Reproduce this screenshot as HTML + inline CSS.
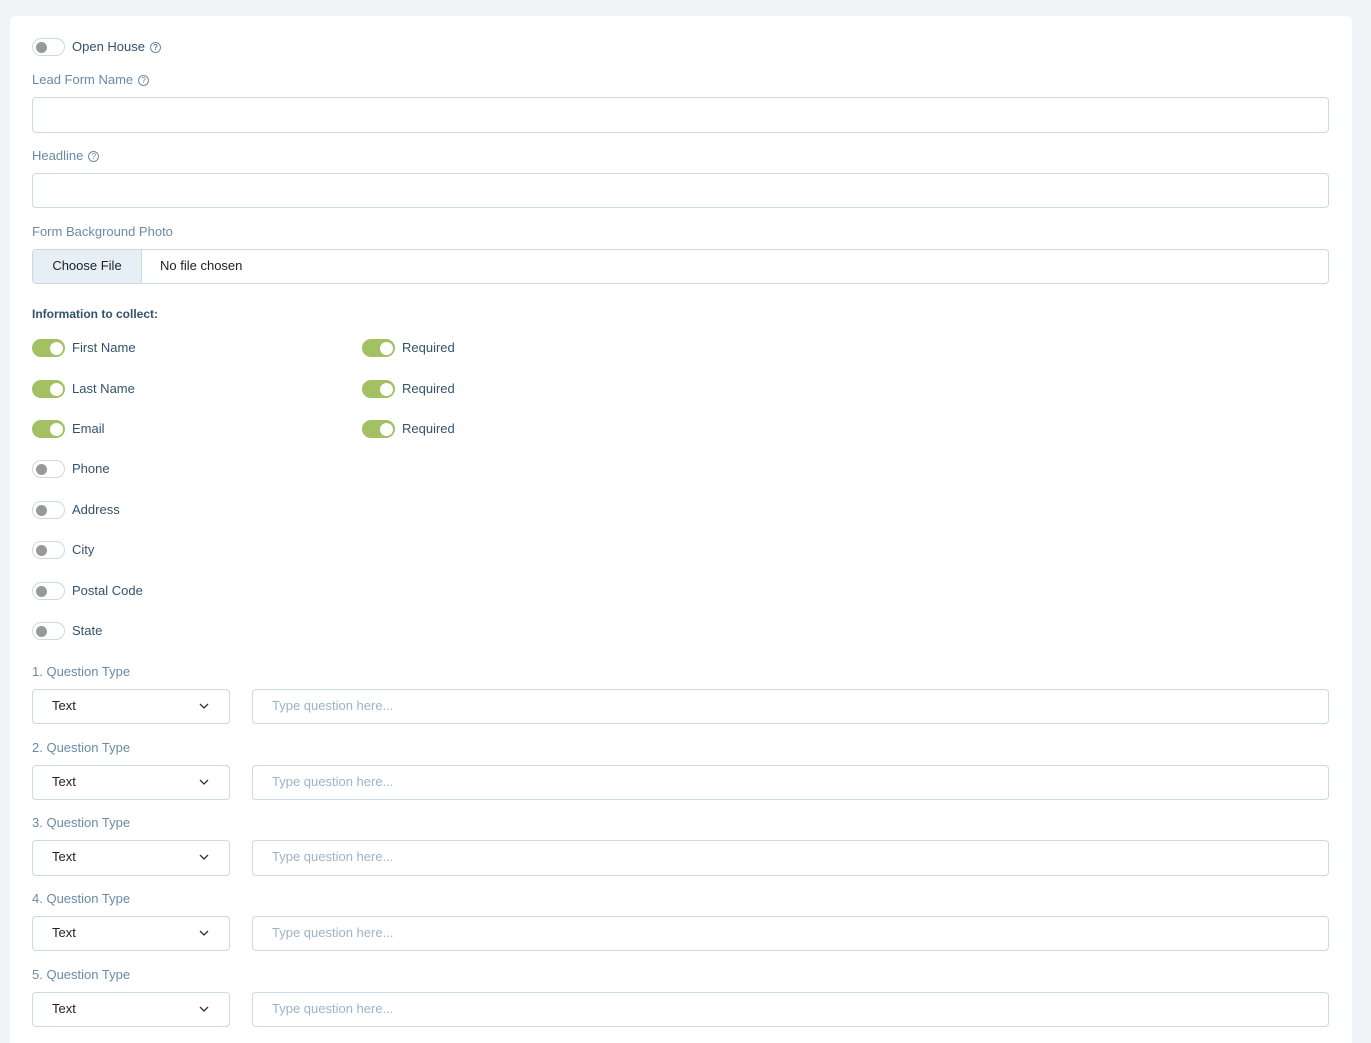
<!DOCTYPE html><html style="height:1043px;overflow:hidden"><head><style>
*{box-sizing:border-box;margin:0;padding:0}
body{width:1371px;height:1043px;background:#f0f4f7;font-family:"Liberation Sans",sans-serif;position:relative;overflow:hidden}
.card{position:absolute;left:10px;top:16px;width:1342px;height:1040px;background:#fff;border-radius:6px}
.a{position:absolute}
.lbl{position:absolute;left:32px;font-size:13px;color:#6b8aa5}
.txt{font-size:13px;color:#34526c}
.inp{position:absolute;border:1px solid #c8dae7;border-radius:4px;background:#fff}
.tg{position:absolute;width:33px;height:18px;border-radius:9px;border:1px solid #c8dae7;background:#fff}
.tg::after{content:"";position:absolute;left:3px;top:3px;width:11px;height:11px;border-radius:50%;background:#999}
.tg.on{background:#a3c063;border-color:#a3c063}
.tg.on::after{left:17px;top:2px;width:13px;height:13px;background:#fff}
.q{display:inline-block;width:11px;height:11px;border:1px solid #6b8aa5;border-radius:50%;font-size:8px;text-align:center;line-height:9px;vertical-align:1px;margin-left:5px}
.sel{font-size:13px;color:#222;padding:0 0 0 19px;line-height:32px}
.ph{font-size:13px;color:#9fb3c4;padding-left:19px;line-height:32px}
</style></head><body>
<div class="card"></div>
<div class="tg" style="left:32px;top:38px"></div><div class="a txt" style="left:72px;top:39px">Open House<span class="q">?</span></div>
<div class="lbl" style="top:72px">Lead Form Name<span class="q">?</span></div>
<div class="inp" style="left:32px;top:97px;width:1297px;height:36px"></div>
<div class="lbl" style="top:148px">Headline<span class="q">?</span></div>
<div class="inp" style="left:32px;top:173px;width:1297px;height:35px"></div>
<div class="lbl" style="top:224px">Form Background Photo</div>
<div class="inp" style="left:32px;top:249px;width:1297px;height:35px;overflow:hidden"><div class="a" style="left:0;top:0;width:109px;height:33px;background:#e6eff6;border-right:1px solid #c8dae7;font-size:13px;color:#222;line-height:32px;text-align:center">Choose File</div><div class="a" style="left:127px;top:0;line-height:32px;font-size:13px;color:#222">No file chosen</div></div>
<div class="a" style="left:32px;top:307px;font-size:12px;font-weight:bold;color:#34526c">Information to collect:</div>
<div class="tg on" style="left:32px;top:339px"></div><div class="a txt" style="left:72px;top:340px">First Name</div>
<div class="tg on" style="left:362px;top:339px"></div><div class="a txt" style="left:402px;top:340px">Required</div>
<div class="tg on" style="left:32px;top:380px"></div><div class="a txt" style="left:72px;top:381px">Last Name</div>
<div class="tg on" style="left:362px;top:380px"></div><div class="a txt" style="left:402px;top:381px">Required</div>
<div class="tg on" style="left:32px;top:420px"></div><div class="a txt" style="left:72px;top:421px">Email</div>
<div class="tg on" style="left:362px;top:420px"></div><div class="a txt" style="left:402px;top:421px">Required</div>
<div class="tg" style="left:32px;top:460px"></div><div class="a txt" style="left:72px;top:461px">Phone</div>
<div class="tg" style="left:32px;top:501px"></div><div class="a txt" style="left:72px;top:502px">Address</div>
<div class="tg" style="left:32px;top:541px"></div><div class="a txt" style="left:72px;top:542px">City</div>
<div class="tg" style="left:32px;top:582px"></div><div class="a txt" style="left:72px;top:583px">Postal Code</div>
<div class="tg" style="left:32px;top:622px"></div><div class="a txt" style="left:72px;top:623px">State</div>
<div class="lbl" style="top:664px">1. Question Type</div>
<div class="inp sel" style="left:32px;top:689px;width:198px;height:35px">Text<svg class="a" style="left:166px;top:13px" width="10" height="7"><path d="M1 1l4 4 4-4" fill="none" stroke="#333" stroke-width="1.3"/></svg></div>
<div class="inp ph" style="left:252px;top:689px;width:1077px;height:35px">Type question here...</div>
<div class="lbl" style="top:740px">2. Question Type</div>
<div class="inp sel" style="left:32px;top:765px;width:198px;height:35px">Text<svg class="a" style="left:166px;top:13px" width="10" height="7"><path d="M1 1l4 4 4-4" fill="none" stroke="#333" stroke-width="1.3"/></svg></div>
<div class="inp ph" style="left:252px;top:765px;width:1077px;height:35px">Type question here...</div>
<div class="lbl" style="top:815px">3. Question Type</div>
<div class="inp sel" style="left:32px;top:840px;width:198px;height:36px">Text<svg class="a" style="left:166px;top:13px" width="10" height="7"><path d="M1 1l4 4 4-4" fill="none" stroke="#333" stroke-width="1.3"/></svg></div>
<div class="inp ph" style="left:252px;top:840px;width:1077px;height:36px">Type question here...</div>
<div class="lbl" style="top:891px">4. Question Type</div>
<div class="inp sel" style="left:32px;top:916px;width:198px;height:35px">Text<svg class="a" style="left:166px;top:13px" width="10" height="7"><path d="M1 1l4 4 4-4" fill="none" stroke="#333" stroke-width="1.3"/></svg></div>
<div class="inp ph" style="left:252px;top:916px;width:1077px;height:35px">Type question here...</div>
<div class="lbl" style="top:967px">5. Question Type</div>
<div class="inp sel" style="left:32px;top:992px;width:198px;height:35px">Text<svg class="a" style="left:166px;top:13px" width="10" height="7"><path d="M1 1l4 4 4-4" fill="none" stroke="#333" stroke-width="1.3"/></svg></div>
<div class="inp ph" style="left:252px;top:992px;width:1077px;height:35px">Type question here...</div>
</body></html>
